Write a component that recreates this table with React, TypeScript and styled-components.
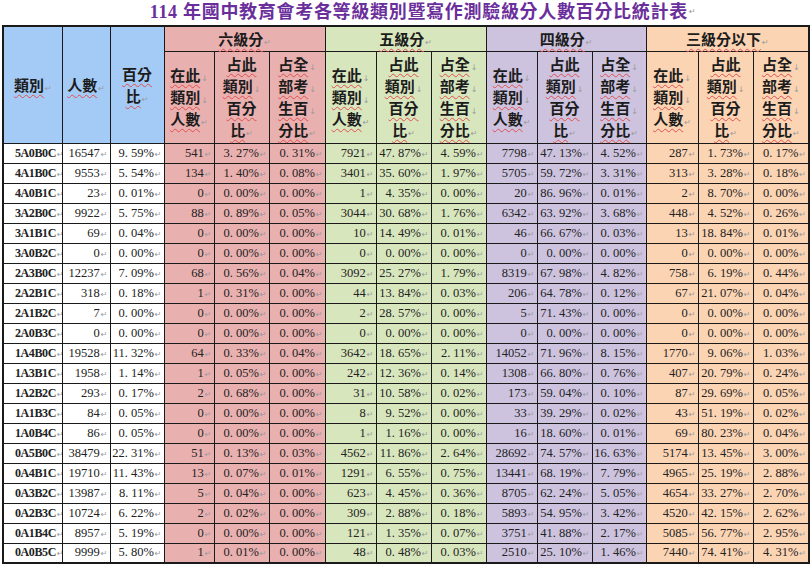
import React from "react";
import styled, { createGlobalStyle } from "styled-components";

type Tone = "blue" | "pink" | "green" | "purple" | "orange" | "white";

const tones: Record<Tone, string> = {
  blue: "#a4cbf6",
  pink: "#e9b0b0",
  green: "#d8e6be",
  purple: "#cdc3df",
  orange: "#fbd4b4",
  white: "#ffffff",
};

const GlobalStyle = createGlobalStyle`
  html, body {
    margin: 0;
    padding: 0;
    background: #ffffff;
  }
  body {
    font-family: "Liberation Serif", "Noto Sans CJK TC", serif;
    color: #1a1a1a;
  }
`;

const Page = styled.div`
  width: 810px;
  height: 564px;
  overflow: hidden;
  display: flex;
  flex-direction: column;
  align-items: flex-start;
`;

const Title = styled.h1`
  margin: 0;
  width: 100%;
  height: 28px;
  display: flex;
  align-items: center;
  justify-content: center;
  padding-left: 36px;
  box-sizing: border-box;
  font-family: "Liberation Serif", "Noto Sans CJK TC", serif;
  font-size: 18px;
  font-weight: 700;
  line-height: 1;
  color: #6b2f9c;
  letter-spacing: 0.7px;
`;

const Table = styled.table`
  margin-left: 2px;
  width: 806px;
  table-layout: fixed;
  border-collapse: collapse;
  border: 2px solid #1a1a1a;
`;

const Col = styled.col<{ $w: number }>`
  width: ${(p) => p.$w}px;
`;

const HeadCell = styled.th<{ $tone: Tone; $h?: number }>`
  background: ${(p) => tones[p.$tone]};
  border: 1.5px solid #1a1a1a;
  padding: 0;
  height: ${(p) => (p.$h ? `${p.$h}px` : "auto")};
  text-align: center;
  vertical-align: middle;
  font-family: "Noto Sans CJK TC", serif;
  font-size: 15px;
  font-weight: 700;
  line-height: 22px;
  color: #1c1c1c;
`;

const Line = styled.div`
  white-space: nowrap;
  height: 22px;
`;

const Squiggle = styled.span`
  text-decoration: underline wavy #e05050;
  text-decoration-thickness: 1px;
  text-underline-offset: 3px;
`;

const Mark = styled.span`
  font-family: "DejaVu Sans", sans-serif;
  font-size: 8px;
  font-weight: 400;
  line-height: 1;
  color: #9a9a9a;
  margin-left: 1px;
`;

const Row = styled.tr`
  height: 20px;
`;

const Cell = styled.td<{ $tone: Tone; $code?: boolean }>`
  background: ${(p) => tones[p.$tone]};
  border: 1.5px solid #1a1a1a;
  padding: ${(p) => (p.$code ? "0 0 0 11px" : "0 2px 0 0")};
  text-align: ${(p) => (p.$code ? "left" : "right")};
  font-family: "Liberation Serif", serif;
  font-size: ${(p) => (p.$code ? "12px" : "12.5px")};
  font-weight: ${(p) => (p.$code ? 700 : 400)};
  letter-spacing: ${(p) => (p.$code ? "-0.4px" : "0")};
  white-space: nowrap;
  overflow: hidden;
  line-height: 17px;
  color: #222222;
`;

const Dot = styled.span`
  margin-right: 3px;
`;

const widths = [59, 48, 54, 50, 55, 56, 51, 55, 55, 51, 55, 54, 52, 55, 56];

const groups: { label: string; tone: Tone }[] = [
  { label: "六級分", tone: "pink" },
  { label: "五級分", tone: "green" },
  { label: "四級分", tone: "purple" },
  { label: "三級分以下", tone: "orange" },
];

const subHeads: string[][] = [
  ["在此↓", "類別↓", "人數↵"],
  ["占此", "類別↓", "百分", "比↵"],
  ["占全↓", "部考↓", "生百↓", "分比↵"],
];

const rows: string[][] = [
  ["5A0B0C", "16547", "9.59%", "541", "3.27%", "0.31%", "7921", "47.87%", "4.59%", "7798", "47.13%", "4.52%", "287", "1.73%", "0.17%"],
  ["4A1B0C", "9553", "5.54%", "134", "1.40%", "0.08%", "3401", "35.60%", "1.97%", "5705", "59.72%", "3.31%", "313", "3.28%", "0.18%"],
  ["4A0B1C", "23", "0.01%", "0", "0.00%", "0.00%", "1", "4.35%", "0.00%", "20", "86.96%", "0.01%", "2", "8.70%", "0.00%"],
  ["3A2B0C", "9922", "5.75%", "88", "0.89%", "0.05%", "3044", "30.68%", "1.76%", "6342", "63.92%", "3.68%", "448", "4.52%", "0.26%"],
  ["3A1B1C", "69", "0.04%", "0", "0.00%", "0.00%", "10", "14.49%", "0.01%", "46", "66.67%", "0.03%", "13", "18.84%", "0.01%"],
  ["3A0B2C", "0", "0.00%", "0", "0.00%", "0.00%", "0", "0.00%", "0.00%", "0", "0.00%", "0.00%", "0", "0.00%", "0.00%"],
  ["2A3B0C", "12237", "7.09%", "68", "0.56%", "0.04%", "3092", "25.27%", "1.79%", "8319", "67.98%", "4.82%", "758", "6.19%", "0.44%"],
  ["2A2B1C", "318", "0.18%", "1", "0.31%", "0.00%", "44", "13.84%", "0.03%", "206", "64.78%", "0.12%", "67", "21.07%", "0.04%"],
  ["2A1B2C", "7", "0.00%", "0", "0.00%", "0.00%", "2", "28.57%", "0.00%", "5", "71.43%", "0.00%", "0", "0.00%", "0.00%"],
  ["2A0B3C", "0", "0.00%", "0", "0.00%", "0.00%", "0", "0.00%", "0.00%", "0", "0.00%", "0.00%", "0", "0.00%", "0.00%"],
  ["1A4B0C", "19528", "11.32%", "64", "0.33%", "0.04%", "3642", "18.65%", "2.11%", "14052", "71.96%", "8.15%", "1770", "9.06%", "1.03%"],
  ["1A3B1C", "1958", "1.14%", "1", "0.05%", "0.00%", "242", "12.36%", "0.14%", "1308", "66.80%", "0.76%", "407", "20.79%", "0.24%"],
  ["1A2B2C", "293", "0.17%", "2", "0.68%", "0.00%", "31", "10.58%", "0.02%", "173", "59.04%", "0.10%", "87", "29.69%", "0.05%"],
  ["1A1B3C", "84", "0.05%", "0", "0.00%", "0.00%", "8", "9.52%", "0.00%", "33", "39.29%", "0.02%", "43", "51.19%", "0.02%"],
  ["1A0B4C", "86", "0.05%", "0", "0.00%", "0.00%", "1", "1.16%", "0.00%", "16", "18.60%", "0.01%", "69", "80.23%", "0.04%"],
  ["0A5B0C", "38479", "22.31%", "51", "0.13%", "0.03%", "4562", "11.86%", "2.64%", "28692", "74.57%", "16.63%", "5174", "13.45%", "3.00%"],
  ["0A4B1C", "19710", "11.43%", "13", "0.07%", "0.01%", "1291", "6.55%", "0.75%", "13441", "68.19%", "7.79%", "4965", "25.19%", "2.88%"],
  ["0A3B2C", "13987", "8.11%", "5", "0.04%", "0.00%", "623", "4.45%", "0.36%", "8705", "62.24%", "5.05%", "4654", "33.27%", "2.70%"],
  ["0A2B3C", "10724", "6.22%", "2", "0.02%", "0.00%", "309", "2.88%", "0.18%", "5893", "54.95%", "3.42%", "4520", "42.15%", "2.62%"],
  ["0A1B4C", "8957", "5.19%", "0", "0.00%", "0.00%", "121", "1.35%", "0.07%", "3751", "41.88%", "2.17%", "5085", "56.77%", "2.95%"],
  ["0A0B5C", "9999", "5.80%", "1", "0.01%", "0.00%", "48", "0.48%", "0.03%", "2510", "25.10%", "1.46%", "7440", "74.41%", "4.31%"],
];

const toneOf = (i: number): Tone => {
  if (i < 3) return "white";
  return groups[Math.floor((i - 3) / 3)].tone;
};

// splits "類別↓" into the underlined word and the trailing mark
const HeadLine = ({ text }: { text: string }) => {
  const last = text.slice(-1);
  const hasMark = last === "↓" || last === "↵";
  const word = hasMark ? text.slice(0, -1) : text;
  return (
    <Line>
      <Squiggle>{word}</Squiggle>
      {hasMark && <Mark>{last}</Mark>}
    </Line>
  );
};

// the decimal point in the source is set with a small gap after it
const Value = ({ v }: { v: string }) => {
  const i = v.indexOf(".");
  if (i < 0) return <>{v}</>;
  return (
    <>
      {v.slice(0, i)}
      <Dot>.</Dot>
      {v.slice(i + 1)}
    </>
  );
};

const App = () => {
  return (
    <Page>
      <GlobalStyle />
      <Title>
        114 年國中教育會考各等級類別暨寫作測驗級分人數百分比統計表
        <Mark>↵</Mark>
      </Title>
      <Table>
        <colgroup>
          {widths.map((w, i) => (
            <Col key={i} $w={w} />
          ))}
        </colgroup>
        <thead>
          <tr>
            <HeadCell $tone="blue" rowSpan={2}>
              <HeadLine text="類別↵" />
            </HeadCell>
            <HeadCell $tone="blue" rowSpan={2}>
              <HeadLine text="人數↵" />
            </HeadCell>
            <HeadCell $tone="blue" rowSpan={2}>
              <HeadLine text="百分" />
              <HeadLine text="比↵" />
            </HeadCell>
            {groups.map((g) => (
              <HeadCell key={g.label} $tone={g.tone} colSpan={3} $h={24}>
                <HeadLine text={`${g.label}↵`} />
              </HeadCell>
            ))}
          </tr>
          <tr>
            {groups.map((g) =>
              subHeads.map((lines, j) => (
                <HeadCell key={`${g.label}-${j}`} $tone={g.tone} $h={91}>
                  {lines.map((l) => (
                    <HeadLine key={l} text={l} />
                  ))}
                </HeadCell>
              ))
            )}
          </tr>
        </thead>
        <tbody>
          {rows.map((r) => (
            <Row key={r[0]}>
              {r.map((v, i) => (
                <Cell key={i} $tone={toneOf(i)} $code={i === 0}>
                  <Value v={v} />
                  <Mark>↵</Mark>
                </Cell>
              ))}
            </Row>
          ))}
        </tbody>
      </Table>
    </Page>
  );
};

export default App;
